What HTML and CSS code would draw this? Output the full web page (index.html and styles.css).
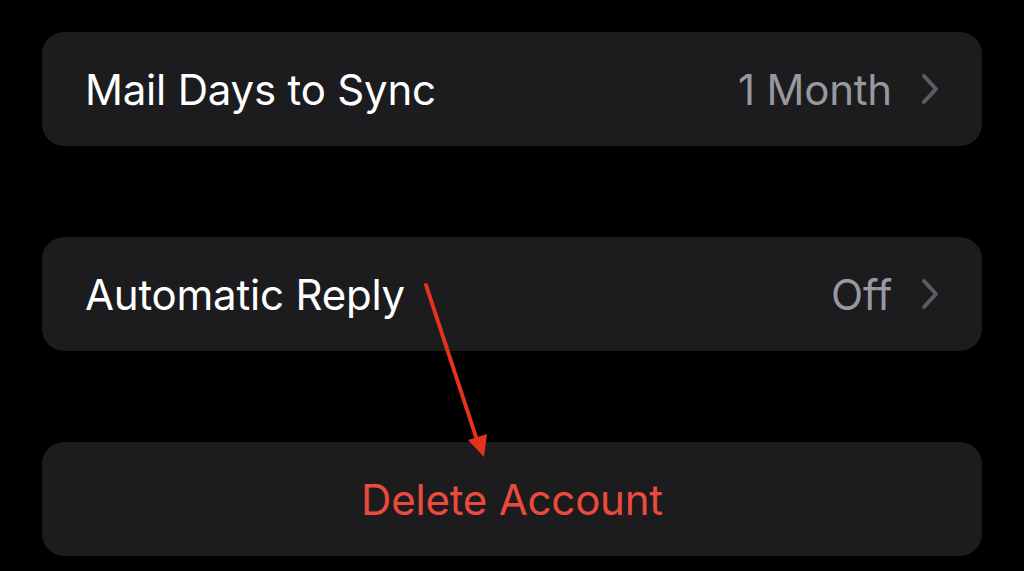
FILE: index.html
```html
<!DOCTYPE html>
<html>
<head>
<meta charset="utf-8">
<link rel="stylesheet" href="styles.css">
</head>
<body>
<div class="list">
  <div class="card row">
    <span class="label">Mail Days to Sync</span>
    <span class="value">1 Month<svg class="chev" viewBox="0 0 20 32" width="20" height="32"><path d="M4 3 L16 16 L4 29" fill="none" stroke="#5b5b60" stroke-width="4" stroke-linecap="round" stroke-linejoin="round"/></svg></span>
  </div>
  <div class="card row">
    <span class="label">Automatic Reply</span>
    <span class="value">Off<svg class="chev" viewBox="0 0 20 32" width="20" height="32"><path d="M4 3 L16 16 L4 29" fill="none" stroke="#5b5b60" stroke-width="4" stroke-linecap="round" stroke-linejoin="round"/></svg></span>
  </div>
  <div class="card danger">Delete Account</div>
</div>
<svg class="arrow" width="1024" height="571" viewBox="0 0 1024 571">
  <line x1="426" y1="285" x2="476" y2="437" stroke="#e5321c" stroke-width="4" stroke-linecap="round"/>
  <polygon points="484,457 468,440 487,434" fill="#e5321c"/>
</svg>
</body>
</html>
```
FILE: styles.css
```css
html, body {
  margin: 0;
  padding: 0;
  background: #000;
  width: 1024px;
  height: 571px;
  overflow: hidden;
}
body {
  position: relative;
  font-family: Inter, "Noto Sans", sans-serif;
}
.list {
  display: flex;
  flex-direction: column;
  gap: 91px;
  padding: 32px 42px 0 42px;
}
.card {
  background: #1c1c1e;
  border-radius: 22px;
  height: 114px;
  box-sizing: border-box;
}
.row {
  display: flex;
  align-items: center;
  justify-content: space-between;
  padding: 0 42px 0 43px;
}
.label {
  color: #fff;
  font-size: 42px;
  letter-spacing: -0.2px;
}
.value {
  color: #98989e;
  font-size: 42px;
  display: flex;
  align-items: center;
  letter-spacing: -0.2px;
}
.chev {
  margin-left: 28px;
}
.danger {
  display: flex;
  align-items: center;
  justify-content: center;
  color: #eb4a3c;
  font-size: 42px;
  letter-spacing: -0.2px;
}
.arrow {
  position: absolute;
  left: 0;
  top: 0;
  pointer-events: none;
}
```
